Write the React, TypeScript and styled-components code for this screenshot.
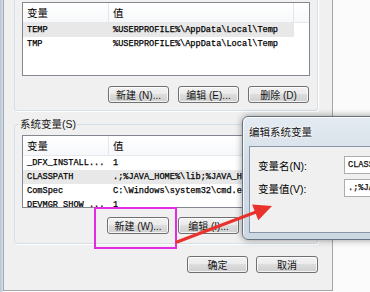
import React from "react";
import styled, { createGlobalStyle } from "styled-components";

const uiFont = `"Liberation Sans", "Noto Sans CJK SC", sans-serif`;
const listFont = `"Liberation Mono", "Noto Sans CJK SC", monospace`;

const GlobalStyle = createGlobalStyle`
  html, body {
    margin: 0;
    padding: 0;
    background: #fbfbfb;
  }
`;

type EnvVar = { name: string; value: string; selected?: boolean };

const userVars: EnvVar[] = [
  { name: "TEMP", value: "%USERPROFILE%\\AppData\\Local\\Temp", selected: true },
  { name: "TMP", value: "%USERPROFILE%\\AppData\\Local\\Temp" }
];

const systemVars: EnvVar[] = [
  { name: "_DFX_INSTALL...", value: "1" },
  {
    name: "CLASSPATH",
    value: ".;%JAVA_HOME%\\lib;%JAVA_HOME%\\lib\\tools.jar",
    selected: true
  },
  { name: "ComSpec", value: "C:\\Windows\\system32\\cmd.exe" },
  { name: "DEVMGR_SHOW_...", value: "1" }
];

const Stage = styled.div`
  position: relative;
  width: 370px;
  height: 292px;
  overflow: hidden;
  background: linear-gradient(to right, #b5c4d4 0, #d6dfe8 3px, #fbfbfb 3px);
  font-family: ${uiFont};
  font-size: 10.5px;
  color: #151515;
`;

const Window = styled.div`
  box-sizing: border-box;
  margin: -22px 0 0 3px;
  width: 330px;
  height: 313px;
  padding: 0 14px 0 10px;
  background: #f0f0f0;
  border: 1px solid #a2a8ae;
  border-top: none;
  display: flex;
  flex-direction: column;
`;

const Group = styled.div<{ $top: number; $bottom: number }>`
  margin-top: ${(p) => p.$top}px;
  padding-bottom: ${(p) => p.$bottom}px;
  border: 1px solid #d5dfe5;
  border-radius: 3px;
  box-shadow: 1px 1px 0 #fff;
  display: flex;
  flex-direction: column;
`;

const Caption = styled.div<{ $left: number }>`
  align-self: flex-start;
  margin: -7px 0 0 ${(p) => p.$left}px;
  padding: 0 1px;
  height: 12px;
  line-height: 12px;
  background: #f0f0f0;
  white-space: nowrap;
`;

const ListBox = styled.div<{ $top: number; $height: number }>`
  box-sizing: border-box;
  width: 288px;
  height: ${(p) => p.$height}px;
  margin: ${(p) => p.$top}px 0 0 7px;
  border: 1px solid #828790;
  background: #fff;
  overflow: hidden;
`;

const HeaderRow = styled.div`
  box-sizing: border-box;
  display: flex;
  height: 20px;
  background: linear-gradient(#ffffff, #f7f8fa);
  border-bottom: 1px solid #e5e8ec;
`;

const HeaderCell = styled.div<{ $width: number }>`
  box-sizing: border-box;
  width: ${(p) => p.$width}px;
  padding-left: 4px;
  display: flex;
  align-items: center;
  border-right: 1px solid #e3e6ea;
  color: #000;
`;

const DataRow = styled.div<{ $selected?: boolean }>`
  display: flex;
  width: 271px;
  height: 14px;
  background: ${(p) => (p.$selected ? "#e8e8e8" : "transparent")};
`;

const DataCell = styled.div<{ $width: number }>`
  box-sizing: border-box;
  width: ${(p) => p.$width}px;
  padding-left: 4px;
  line-height: 14px;
  font-family: ${listFont};
  font-size: 8.6px;
  color: #000;
  -webkit-text-stroke: 0.25px #000;
  white-space: nowrap;
  overflow: hidden;
`;

const ButtonRow = styled.div<{ $top: number; $right: number; $gap: number }>`
  display: flex;
  justify-content: flex-end;
  gap: ${(p) => p.$gap}px;
  margin-top: ${(p) => p.$top}px;
  padding-right: ${(p) => p.$right}px;
`;

const Button = styled.div<{ $width: number }>`
  box-sizing: border-box;
  width: ${(p) => p.$width}px;
  height: 17px;
  border: 1px solid #707070;
  border-radius: 3px;
  background: linear-gradient(#f2f2f2 0%, #ebebeb 45%, #dddddd 50%, #cfcfcf 100%);
  box-shadow: inset 0 0 0 1px rgba(255, 255, 255, 0.75);
  display: flex;
  align-items: center;
  justify-content: center;
  white-space: nowrap;
  font-size: 10px;
`;

const EditDialog = styled.div`
  position: absolute;
  left: 242px;
  top: 116px;
  width: 150px;
  height: 124px;
  box-sizing: border-box;
  padding: 0 0 6px 6px;
  border: 1px solid #66737f;
  border-radius: 6px 0 0 6px;
  background: linear-gradient(#e4ebf2, #d3dce6 40%, #cdd7e2);
  box-shadow: 0 0 7px rgba(0, 0, 0, 0.4), inset 1px 1px 0 rgba(255, 255, 255, 0.8);
  display: flex;
  flex-direction: column;
`;

const TitleBar = styled.div`
  height: 29px;
  display: flex;
  align-items: center;
  font-size: 10.5px;
  color: #111;
  text-shadow: 0 0 4px #fff, 0 0 2px #fff;
`;

const Client = styled.div`
  flex: 1;
  padding: 8px 0 0 8px;
  background: #f0f0f0;
  border: 1px solid #8796a6;
  border-right: none;
  display: flex;
  flex-direction: column;
  gap: 3px;
`;

const FieldRow = styled.div`
  display: flex;
  align-items: center;
  height: 20px;
`;

const FieldLabel = styled.div`
  width: 86px;
  white-space: nowrap;
  color: #000;
`;

const TextBox = styled.div`
  flex: 1;
  box-sizing: border-box;
  height: 18px;
  padding-left: 3px;
  border: 1px solid #abadb3;
  border-right: none;
  background: #fff;
  font-family: ${listFont};
  font-size: 8.6px;
  -webkit-text-stroke: 0.25px #000;
  line-height: 16px;
  white-space: nowrap;
  overflow: hidden;
`;

const Highlight = styled.div`
  position: absolute;
  left: 94px;
  top: 207px;
  width: 83px;
  height: 42px;
  box-sizing: border-box;
  border: 2px solid #e22ce2;
`;

const Arrow = styled.svg`
  position: absolute;
  left: 0;
  top: 0;
`;

const VarList = ({ rows, top, height }: { rows: EnvVar[]; top: number; height: number }) => (
  <ListBox $top={top} $height={height}>
    <HeaderRow>
      <HeaderCell $width={86}>变量</HeaderCell>
      <HeaderCell $width={185}>值</HeaderCell>
    </HeaderRow>
    {rows.map((r) => (
      <DataRow key={r.name} $selected={r.selected}>
        <DataCell $width={86}>{r.name}</DataCell>
        <DataCell $width={185}>{r.value}</DataCell>
      </DataRow>
    ))}
  </ListBox>
);

export default function App() {
  return (
    <>
      <GlobalStyle />
      <Stage>
        <Window>
          <Group $top={11} $bottom={7}>
            <Caption $left={4}>Administrator 的用户变量(U)</Caption>
            <VarList rows={userVars} top={7} height={74} />
            <ButtonRow $top={10} $right={8} $gap={9}>
              <Button $width={61}>新建 (N)...</Button>
              <Button $width={61}>编辑 (E)...</Button>
              <Button $width={61}>删除 (D)</Button>
            </ButtonRow>
          </Group>

          <Group $top={13} $bottom={9}>
            <Caption $left={4}>系统变量(S)</Caption>
            <VarList rows={systemVars} top={5} height={73} />
            <ButtonRow $top={9} $right={8} $gap={9}>
              <Button $width={62}>新建 (W)...</Button>
              <Button $width={61}>编辑 (I)...</Button>
              <Button $width={61}>删除 (L)</Button>
            </ButtonRow>
          </Group>

          <ButtonRow $top={12} $right={0} $gap={8}>
            <Button $width={61}>确定</Button>
            <Button $width={62}>取消</Button>
          </ButtonRow>
        </Window>

        <EditDialog>
          <TitleBar>编辑系统变量</TitleBar>
          <Client>
            <FieldRow>
              <FieldLabel>变量名(N):</FieldLabel>
              <TextBox>CLASSPATH</TextBox>
            </FieldRow>
            <FieldRow>
              <FieldLabel>变量值(V):</FieldLabel>
              <TextBox>.;%JAVA_HOME%\lib;%JAVA_HOME%\lib\tools.jar</TextBox>
            </FieldRow>
          </Client>
        </EditDialog>

        <Highlight />

        <Arrow width={370} height={292} viewBox="0 0 370 292">
          <line x1={177} y1={242} x2={256} y2={212} stroke="#e8322b" strokeWidth={3} strokeLinecap="round" />
          <polygon points="272,206 258.3,220.2 252.1,204.6" fill="#e8322b" />
        </Arrow>
      </Stage>
    </>
  );
}
